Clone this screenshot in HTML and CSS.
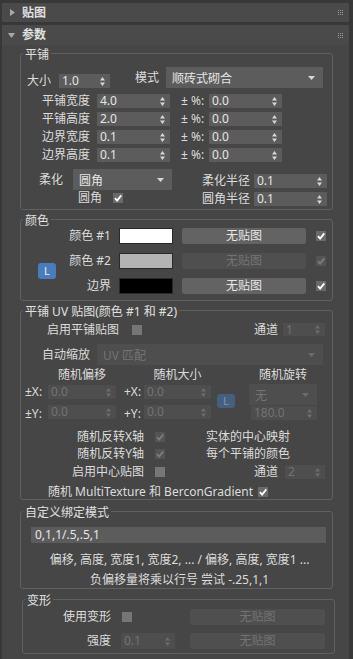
FILE: index.html
```html
<!DOCTYPE html>
<html>
  <head>
    <title>平铺 参数</title>
    <link rel="stylesheet" href="styles.css">
  </head>
  <body>
    <div class="bar">
      <svg class="tri" width="5" height="7" viewBox="0 0 5 7"><path d="M0 0L5 3.5L0 7z"/></svg>
      <span class="bar-title">贴图</span>
      <svg class="grip" width="5" height="5" viewBox="0 0 5 5"><path d="M0 0h1v1H0zM2 0h1v1H2zM4 0h1v1H4zM0 2h1v1H0zM2 2h1v1H2zM4 2h1v1H4zM0 4h1v1H0zM2 4h1v1H2zM4 4h1v1H4z"/></svg>
    </div>

    <div class="panel">
      <div class="bar bar-open">
        <svg class="tri" width="7" height="5" viewBox="0 0 7 5"><path d="M0 0H7L3.5 5z"/></svg>
        <span class="bar-title">参数</span>
        <svg class="grip" width="5" height="5" viewBox="0 0 5 5"><path d="M0 0h1v1H0zM2 0h1v1H2zM4 0h1v1H4zM0 2h1v1H0zM2 2h1v1H2zM4 2h1v1H4zM0 4h1v1H0zM2 4h1v1H2zM4 4h1v1H4z"/></svg>
      </div>

      <!-- 平铺 -->
      <fieldset class="grp grp-tile">
        <legend>平铺</legend>
        <div class="row row-size">
          <span class="lbl l-size">大小</span>
          <div class="spin w51">1.0<svg class="ud" width="5" height="9" viewBox="0 0 5 9"><path d="M2.5 0L5 3.5H0zM2.5 9L0 5.5H5z"/></svg></div>
          <span class="lbl l-mode">模式</span>
          <div class="drop w157">顺砖式砌合<svg class="dn" width="7" height="4" viewBox="0 0 7 4"><path d="M0 0H7L3.5 4z"/></svg></div>
        </div>
        <div class="row row-tile">
          <span class="lbl r w69">平铺宽度</span>
          <div class="spin ml7 w73">4.0<svg class="ud" width="5" height="9" viewBox="0 0 5 9"><path d="M2.5 0L5 3.5H0zM2.5 9L0 5.5H5z"/></svg></div>
          <span class="lbl pct">± %:</span>
          <div class="spin w73">0.0<svg class="ud" width="5" height="9" viewBox="0 0 5 9"><path d="M2.5 0L5 3.5H0zM2.5 9L0 5.5H5z"/></svg></div>
        </div>
        <div class="row row-tile">
          <span class="lbl r w69">平铺高度</span>
          <div class="spin ml7 w73">2.0<svg class="ud" width="5" height="9" viewBox="0 0 5 9"><path d="M2.5 0L5 3.5H0zM2.5 9L0 5.5H5z"/></svg></div>
          <span class="lbl pct">± %:</span>
          <div class="spin w73">0.0<svg class="ud" width="5" height="9" viewBox="0 0 5 9"><path d="M2.5 0L5 3.5H0zM2.5 9L0 5.5H5z"/></svg></div>
        </div>
        <div class="row row-tile">
          <span class="lbl r w69">边界宽度</span>
          <div class="spin ml7 w73">0.1<svg class="ud" width="5" height="9" viewBox="0 0 5 9"><path d="M2.5 0L5 3.5H0zM2.5 9L0 5.5H5z"/></svg></div>
          <span class="lbl pct">± %:</span>
          <div class="spin w73">0.0<svg class="ud" width="5" height="9" viewBox="0 0 5 9"><path d="M2.5 0L5 3.5H0zM2.5 9L0 5.5H5z"/></svg></div>
        </div>
        <div class="row row-tile">
          <span class="lbl r w69">边界高度</span>
          <div class="spin ml7 w73">0.1<svg class="ud" width="5" height="9" viewBox="0 0 5 9"><path d="M2.5 0L5 3.5H0zM2.5 9L0 5.5H5z"/></svg></div>
          <span class="lbl pct">± %:</span>
          <div class="spin w73">0.0<svg class="ud" width="5" height="9" viewBox="0 0 5 9"><path d="M2.5 0L5 3.5H0zM2.5 9L0 5.5H5z"/></svg></div>
        </div>
        <div class="soft">
          <div class="soft-left">
            <div class="row row-soft">
              <span class="lbl r w42">柔化</span>
              <div class="drop ml10 w99">圆角<svg class="dn" width="7" height="4" viewBox="0 0 7 4"><path d="M0 0H7L3.5 4z"/></svg></div>
            </div>
            <div class="row row-round">
              <span class="lbl r w81">圆角</span>
              <span class="chk ml11 on"><svg width="10" height="10" viewBox="0 0 10 10"><path d="M2 5.2L4.1 7.6L8.3 2.4"/></svg></span>
            </div>
          </div>
          <div class="soft-right">
            <div class="row row-rad">
              <span class="lbl w48">柔化半径</span>
              <div class="spin ml4 w73">0.1<svg class="ud" width="5" height="9" viewBox="0 0 5 9"><path d="M2.5 0L5 3.5H0zM2.5 9L0 5.5H5z"/></svg></div>
            </div>
            <div class="row row-rad2">
              <span class="lbl w48">圆角半径</span>
              <div class="spin ml4 w73">0.1<svg class="ud" width="5" height="9" viewBox="0 0 5 9"><path d="M2.5 0L5 3.5H0zM2.5 9L0 5.5H5z"/></svg></div>
            </div>
          </div>
        </div>
      </fieldset>

      <!-- 颜色 -->
      <fieldset class="grp grp-color">
        <legend>颜色</legend>
        <div class="colors">
          <div class="lock-col"><span class="lock">L</span></div>
          <div class="color-rows">
            <div class="row row-color">
              <span class="lbl r w55">颜色 #1</span>
              <span class="swatch white"></span>
              <span class="btn">无贴图</span>
              <span class="chk ml10 on"><svg width="10" height="10" viewBox="0 0 10 10"><path d="M2 5.2L4.1 7.6L8.3 2.4"/></svg></span>
            </div>
            <div class="row row-color">
              <span class="lbl r w55">颜色 #2</span>
              <span class="swatch grey"></span>
              <span class="btn off">无贴图</span>
              <span class="chk ml10 on dis"><svg width="10" height="10" viewBox="0 0 10 10"><path d="M2 5.2L4.1 7.6L8.3 2.4"/></svg></span>
            </div>
            <div class="row row-color">
              <span class="lbl r w55">边界</span>
              <span class="swatch black"></span>
              <span class="btn">无贴图</span>
              <span class="chk ml10 on"><svg width="10" height="10" viewBox="0 0 10 10"><path d="M2 5.2L4.1 7.6L8.3 2.4"/></svg></span>
            </div>
          </div>
        </div>
      </fieldset>

      <!-- 平铺 UV 贴图 -->
      <fieldset class="grp grp-uv">
        <legend>平铺 UV 贴图(颜色 #1 和 #2)</legend>
        <div class="row row-uv1">
          <span class="lbl r w98">启用平铺贴图</span>
          <span class="chk ml13"></span>
          <span class="lbl ml112 w24">通道</span>
          <div class="spin ml5 w42 dis">1<svg class="ud" width="5" height="9" viewBox="0 0 5 9"><path d="M2.5 0L5 3.5H0zM2.5 9L0 5.5H5z"/></svg></div>
        </div>
        <div class="row row-uv2">
          <span class="lbl r w69">自动缩放</span>
          <div class="drop ml7 w226 dis">UV 匹配<svg class="dn" width="7" height="4" viewBox="0 0 7 4"><path d="M0 0H7L3.5 4z"/></svg></div>
        </div>
        <div class="rand">
          <div class="rand-col col-a">
            <div class="rand-head pl23">随机偏移</div>
            <div class="row rand-x">
              <span class="lbl w23">±X:</span>
              <div class="spin w68 dis">0.0<svg class="ud" width="5" height="9" viewBox="0 0 5 9"><path d="M2.5 0L5 3.5H0zM2.5 9L0 5.5H5z"/></svg></div>
            </div>
            <div class="row rand-y">
              <span class="lbl w23">±Y:</span>
              <div class="spin w68 dis">0.0<svg class="ud" width="5" height="9" viewBox="0 0 5 9"><path d="M2.5 0L5 3.5H0zM2.5 9L0 5.5H5z"/></svg></div>
            </div>
          </div>
          <div class="rand-col col-b">
            <div class="rand-head pl20">随机大小</div>
            <div class="row rand-x">
              <span class="lbl w20">+X:</span>
              <div class="spin w67 dis">0.0<svg class="ud" width="5" height="9" viewBox="0 0 5 9"><path d="M2.5 0L5 3.5H0zM2.5 9L0 5.5H5z"/></svg></div>
            </div>
            <div class="row rand-y">
              <span class="lbl w20">+Y:</span>
              <div class="spin w67 dis">0.0<svg class="ud" width="5" height="9" viewBox="0 0 5 9"><path d="M2.5 0L5 3.5H0zM2.5 9L0 5.5H5z"/></svg></div>
            </div>
          </div>
          <span class="lock lock-dis">L</span>
          <div class="rand-col col-c">
            <div class="rand-head">随机旋转</div>
            <div class="drop w68 dis rot">无<svg class="dn" width="7" height="4" viewBox="0 0 7 4"><path d="M0 0H7L3.5 4z"/></svg></div>
            <div class="spin w66 dis rot-spin">180.0<svg class="ud" width="5" height="9" viewBox="0 0 5 9"><path d="M2.5 0L5 3.5H0zM2.5 9L0 5.5H5z"/></svg></div>
          </div>
        </div>
        <div class="row row-chk first">
          <span class="lbl r w123">随机反转X轴</span>
          <span class="chk ml11 on dis"><svg width="10" height="10" viewBox="0 0 10 10"><path d="M2 5.2L4.1 7.6L8.3 2.4"/></svg></span>
          <span class="lbl ml41">实体的中心映射</span>
        </div>
        <div class="row row-chk">
          <span class="lbl r w123">随机反转Y轴</span>
          <span class="chk ml11 on dis"><svg width="10" height="10" viewBox="0 0 10 10"><path d="M2 5.2L4.1 7.6L8.3 2.4"/></svg></span>
          <span class="lbl ml41">每个平铺的颜色</span>
        </div>
        <div class="row row-chk mid">
          <span class="lbl r w123">启用中心贴图</span>
          <span class="chk ml11"></span>
          <span class="lbl ml89 w24">通道</span>
          <div class="spin ml7 w40 dis">2<svg class="ud" width="5" height="9" viewBox="0 0 5 9"><path d="M2.5 0L5 3.5H0zM2.5 9L0 5.5H5z"/></svg></div>
        </div>
        <div class="row row-multi">
          <span class="lbl multi">随机 MultiTexture 和 BerconGradient</span>
          <span class="chk on"><svg width="10" height="10" viewBox="0 0 10 10"><path d="M2 5.2L4.1 7.6L8.3 2.4"/></svg></span>
        </div>
      </fieldset>

      <!-- 自定义绑定模式 -->
      <fieldset class="grp grp-custom">
        <legend>自定义绑定模式</legend>
        <div class="text-field">0,1,1/.5,.5,1</div>
        <div class="hint first">偏移, 高度, 宽度1, 宽度2, ... / 偏移, 高度, 宽度1 ...</div>
        <div class="hint">负偏移量将乘以行号 尝试 -.25,1,1</div>
      </fieldset>

      <!-- 变形 -->
      <fieldset class="grp grp-warp">
        <legend>变形</legend>
        <div class="row row-warp1">
          <span class="lbl r w88">使用变形</span>
          <span class="chk ml11"></span>
          <span class="btn off wide ml58">无贴图</span>
        </div>
        <div class="row row-warp2">
          <span class="lbl r w88">强度</span>
          <div class="spin ml10 w54 dis tall">0.1<svg class="ud" width="5" height="9" viewBox="0 0 5 9"><path d="M2.5 0L5 3.5H0zM2.5 9L0 5.5H5z"/></svg></div>
          <span class="btn off wide ml15">无贴图</span>
        </div>
      </fieldset>
    </div>
  </body>
</html>
```

FILE: styles.css
```css
* {
  box-sizing: border-box;
}

body {
  margin: 0;
  width: 353px;
  height: 659px;
  overflow: hidden;
  background-color: #383838;
  color: #dcdcdc;
  font-family: "Noto Sans", "Noto Sans CJK SC", sans-serif;
  font-size: 12px;
}

/* rollout headers */
.bar {
  display: flex;
  align-items: center;
  height: 19px;
  width: 347px;
  margin: 3px 0 0 2px;
  background-color: #4a4a4a;
}

.bar-open {
  width: auto;
  height: 20px;
  margin: 0;
}

.tri {
  fill: #a8a8a8;
  margin-left: 8px;
}

.bar-open .tri {
  margin-left: 6px;
}

.bar-title {
  font-weight: bold;
  line-height: 14px;
  margin-left: 7px;
  color: #e0e0e0;
}

.bar-open .bar-title {
  margin-left: 7px;
}

.grip {
  fill: #9a9a9a;
  margin-left: auto;
  margin-right: 6px;
}

.panel {
  width: 347px;
  height: 634px;
  margin: 3px 0 0 2px;
  background-color: #464646;
  overflow: hidden;
}

/* group boxes */
.grp {
  margin: 0 16px 0 18px;
  padding: 0;
  min-width: 0;
  border: 1px solid #606060;
  border-radius: 3px;
}

.grp legend {
  margin-left: 2px;
  padding: 3px 2px 0;
  line-height: 13px;
  color: #e0e0e0;
}

.grp-tile {
  padding-bottom: 3px;
}

.grp-color {
  margin-top: 1px;
  padding-bottom: 6px;
}

.grp-uv {
  margin-top: 1px;
  padding-bottom: 1px;
}

.grp-custom {
  margin-top: 3px;
  padding-bottom: 1px;
}

.grp-warp {
  margin: 2px 14px 0 20px;
  padding-bottom: 4px;
}

/* generic row pieces */
.row {
  display: flex;
  align-items: center;
}

.lbl {
  flex: none;
  line-height: 14px;
  white-space: nowrap;
}

.lbl.r {
  text-align: right;
}

.spin,
.drop {
  flex: none;
  display: flex;
  align-items: center;
  justify-content: space-between;
  background-color: #5c5c5c;
  color: #e6e6e6;
  white-space: nowrap;
}

.spin {
  height: 14px;
  padding: 0 5px 0 3px;
  line-height: 14px;
}

.spin.tall {
  height: 16px;
}

.drop {
  height: 21px;
  padding: 0 8px 0 6px;
}

.ud,
.dn {
  fill: #d6d6d6;
  flex: none;
}

.spin.dis,
.drop.dis {
  background-color: #4e4e4e;
  color: #737373;
}

.dis .ud,
.dis .dn {
  fill: #6c6c6c;
}

.chk {
  flex: none;
  width: 10px;
  height: 10px;
  background-color: #767676;
}

.chk.on {
  background-color: #6a6a6a;
}

.chk svg {
  display: block;
  fill: none;
  stroke: #ffffff;
  stroke-width: 1.8;
}

.chk.dis {
  background-color: #545454;
}

.chk.dis svg {
  stroke: #7c7c7c;
}

.btn {
  flex: none;
  width: 124px;
  height: 16px;
  margin-left: 9px;
  line-height: 16px;
  text-align: center;
  background-color: #636363;
  border-radius: 2px;
  color: #e6e6e6;
}

.btn.off {
  background-color: #4f4f4f;
  color: #737373;
}

.btn.wide {
  width: 135px;
}

.lock {
  display: block;
  width: 18px;
  height: 16px;
  line-height: 16px;
  text-align: center;
  border-radius: 3px;
  background-color: #4a7cbd;
  color: #e8eef8;
  font-size: 11px;
}

.lock-dis {
  flex: none;
  height: 14px;
  line-height: 14px;
  margin: 26px 0 0 6px;
  background-color: #45607f;
  color: #8294aa;
}

/* widths and offsets */
.w20 { width: 20px; }
.w23 { width: 23px; }
.w24 { width: 24px; }
.w40 { width: 40px; }
.w42 { width: 42px; }
.w48 { width: 48px; }
.w51 { width: 51px; }
.w54 { width: 54px; }
.w55 { width: 55px; }
.w66 { width: 66px; }
.w67 { width: 67px; }
.w68 { width: 68px; }
.w69 { width: 69px; }
.w73 { width: 73px; }
.w81 { width: 81px; }
.w88 { width: 88px; }
.w98 { width: 98px; }
.w99 { width: 99px; }
.w123 { width: 123px; }
.w157 { width: 157px; }
.w226 { width: 226px; }

.ml4 { margin-left: 4px; }
.ml5 { margin-left: 5px; }
.ml7 { margin-left: 7px; }
.ml10 { margin-left: 10px; }
.ml11 { margin-left: 11px; }
.ml13 { margin-left: 13px; }
.ml15 { margin-left: 15px; }
.ml41 { margin-left: 41px; }
.ml58 { margin-left: 58px; }
.ml89 { margin-left: 89px; }
.ml112 { margin-left: 112px; }

/* 平铺 */
.row-size {
  align-items: flex-end;
  height: 21px;
  margin-top: 6px;
}

.l-size {
  width: 38px;
  padding-left: 6px;
}

.l-mode {
  width: 31px;
  margin-left: 25px;
  align-self: center;
}

.row-size .drop {
  align-self: stretch;
}

.row-tile {
  height: 14px;
  margin-top: 4px;
}

.row-size + .row-tile {
  margin-top: 6px;
}

.pct {
  width: 28px;
  margin-left: 11px;
}

.soft {
  display: flex;
  margin-top: 7px;
}

.soft-left {
  width: 181px;
}

.row-soft {
  height: 21px;
}

.row-soft .drop {
  height: 21px;
}

.row-round {
  height: 14px;
  margin-top: 1px;
}

.row-rad {
  height: 14px;
  margin-top: 5px;
}

.row-rad2 {
  height: 14px;
  margin-top: 4px;
}

/* 颜色 */
.colors {
  display: flex;
}

.lock-col {
  width: 18px;
  margin: 36px 0 0 17px;
}

.row-color {
  height: 17px;
  margin-top: 8px;
}

.row-color:first-child {
  margin-top: 0;
}

.swatch {
  flex: none;
  width: 54px;
  height: 16px;
  margin-left: 8px;
  border: 1px solid #2a2a2a;
}

.swatch.white {
  background-color: #ffffff;
}

.swatch.grey {
  background-color: #b4b4b4;
}

.swatch.black {
  background-color: #000000;
}

/* 平铺 UV */
.row-uv1 {
  height: 13px;
  margin-top: 5px;
}

.row-uv1 .spin {
  height: 13px;
}

.row-uv2 {
  height: 21px;
  margin-top: 8px;
}

.rand {
  display: flex;
  margin-top: 3px;
}

.rand-head {
  line-height: 14px;
  text-align: center;
  white-space: nowrap;
}

.pl20 { padding-left: 20px; }
.pl23 { padding-left: 23px; }

.col-a {
  width: 91px;
  margin-left: 4px;
}

.col-b {
  width: 87px;
  margin-left: 8px;
}

.col-c {
  width: 68px;
  margin-left: 14px;
}

.rand-x {
  height: 14px;
  margin-top: 3px;
}

.rand-y {
  height: 14px;
  margin-top: 6px;
}

.rand-y .lbl {
  padding-top: 3px;
}

.rot {
  margin-top: 2px;
}

.rot-spin {
  margin: 1px 0 0 2px;
}

.row-chk {
  height: 14px;
  margin-top: 3px;
}

.row-chk.first {
  margin-top: 10px;
}

.row-chk.mid {
  margin-top: 4px;
}

.row-multi {
  height: 13px;
  margin-top: 6px;
}

.multi {
  width: 210px;
  margin-left: 27px;
}

/* 自定义绑定模式 */
.text-field {
  width: 295px;
  height: 16px;
  margin: 8px 0 0 10px;
  padding-left: 4px;
  line-height: 16px;
  background-color: #5c5c5c;
  color: #e6e6e6;
}

.hint {
  margin-top: 6px;
  padding-left: 6px;
  line-height: 14px;
  text-align: center;
}

.hint.first {
  margin-top: 10px;
}

/* 变形 */
.row-warp1 {
  height: 16px;
  margin-top: 2px;
}

.row-warp2 {
  height: 16px;
  margin-top: 8px;
}
```
